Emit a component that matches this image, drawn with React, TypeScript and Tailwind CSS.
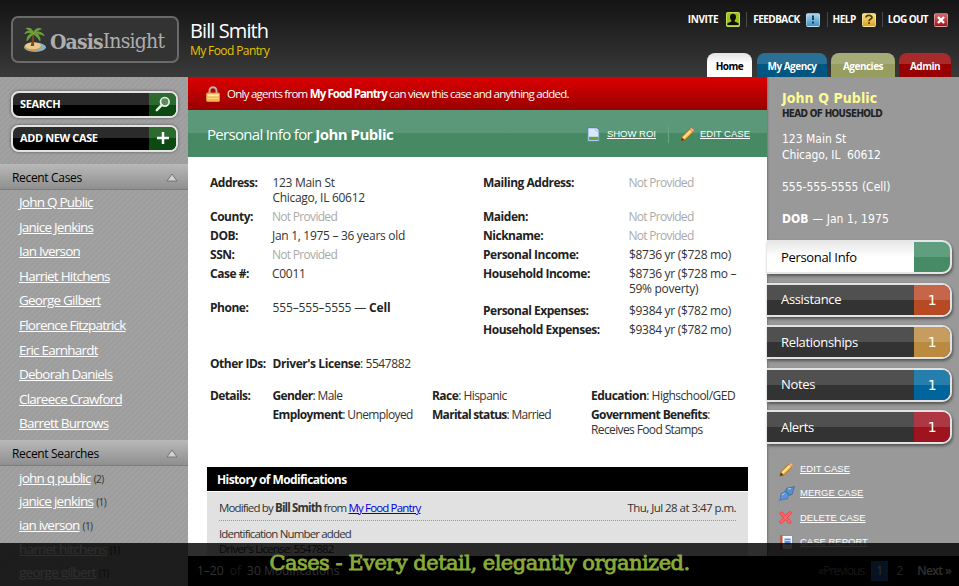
import type { ReactNode } from "react";
import { clsx } from "clsx";

/* ---------- icons ---------- */

function PalmLogo() {
  return (
    <svg width="24" height="26" viewBox="0 0 24 26" className="shrink-0">
      <ellipse cx="12" cy="20.3" rx="11" ry="4.7" fill="#7fb4cc" />
      <ellipse cx="10" cy="19.8" rx="8.5" ry="4.3" fill="#c99a52" />
      <ellipse cx="10" cy="18.8" rx="8" ry="3.4" fill="#ecca8c" />
      <path d="M9.5 6c-.2 5-.6 9-1.900 13h3.600C10.600 14 10.800 10 11.500 6z" fill="#7d4a22" />
      <path d="M10.500 6.500C8 3.500 4.500 3 2 6.500c2.500-1.500 5-1.200 8.500 0zM10.500 6.500C9.500 3 7 .5 3.500 1.500c3 .5 4.500 2.500 7 5zM10.500 6.500C11.500 3 14 .8 18 2c-3 .6-5 2-7.500 4.500zM10.500 6.500c3-2.500 8-2 10.500 2-3-1.800-6-2-10.500-2zM10.500 6.500c-3 0-6.500 2-6.500 7C6 10.500 7.500 9 10.500 6.500zM10.500 6.500c4 .5 6.500 2.500 6.500 7-1.500-3-3.500-4.500-6.500-7z" fill="#6fa03c" stroke="#6fa03c" strokeWidth="1.100" strokeLinejoin="round" />
    </svg>
  );
}

function PersonIcon() {
  return (
    <svg width="14" height="15" viewBox="0 0 14 15">
      <rect width="14" height="15" rx="2" fill="#9bc31c" />
      <rect x=".5" y=".5" width="13" height="14" rx="1.500" fill="none" stroke="#c2dc5a" />
      <path d="M4 5c0-2 1.200-3.200 3-3.200S10 3 10 5c0 1.600-.6 2.700-1.400 3.400v1.100l4 1.700V13H1.400v-1.800l4-1.700V8.400C4.600 7.700 4 6.600 4 5z" fill="#0d0f05" />
    </svg>
  );
}

function SquareIcon({ className, children }: { className: string; children: ReactNode }) {
  return (
    <span className={clsx("flex h-[14px] w-[14px] items-center justify-center rounded-[2px] border border-white/35", className)}>
      {children}
    </span>
  );
}

function PencilIcon() {
  return (
    <svg width="15" height="15" viewBox="0 0 15 15">
      <path d="M1 14l1-4.300L10 2l3 3-8 7.800z" fill="#f4bd45" stroke="#a86d1c" strokeWidth=".8" strokeLinejoin="round" />
      <path d="M3 10.200L10.500 3l1.100 1.100L4 11.500z" fill="#ffe79a" />
      <path d="M9.800 2.200l1.300-1.300c.8-.6 3.500 1.900 2.800 2.800L12.700 5z" fill="#efb3a0" stroke="#b87a4a" strokeWidth=".6" />
      <path d="M1 14l.9-3.500 2.700 2.400z" fill="#5b3418" />
    </svg>
  );
}

function PageIcon() {
  return (
    <svg width="13" height="15" viewBox="0 0 13 15">
      <path d="M.7.700h8.500l3 3v10.600H.7z" fill="#d9e8fb" stroke="#4b7fd0" strokeWidth="1.200" />
      <path d="M9 .7v3.200h3.200" fill="#fff" stroke="#7fa6e0" strokeWidth=".7" />
      <path d="M2 9.800h9.500V13H2z" fill="#66a53c" />
    </svg>
  );
}

function LockIcon() {
  return (
    <svg width="14" height="16" viewBox="0 0 14 16">
      <path d="M3.500 8V4.800C3.500 2.600 4.900 1.300 7 1.300S10.500 2.600 10.500 4.800V8" fill="none" stroke="#b9b4ae" strokeWidth="1.900" />
      <rect x=".5" y="7" width="13" height="8.500" rx="1" fill="#f3b84a" stroke="#e0a23c" strokeWidth=".8" />
      <path d="M1.500 8.300h11v2h-11z" fill="#ffeaa8" />
      <path d="M1.500 12.300h11" stroke="#fbdc8e" />
    </svg>
  );
}

function MergeIcon() {
  return (
    <svg width="16" height="15" viewBox="0 0 16 15">
      <path d="M.6 14.500l1-3.500.5-3.500 3.200-1.500 1.200-1.700L9 6.500l1.500 2L9.300 10l-1 3-3.500.2z" fill="#5f92d8" stroke="#3e6cb2" strokeWidth=".7" />
      <path d="M15.400.5l-1 3.800-1.200 3.900-2.800 1.200L6.500 5l1.500-3 3.700-.5z" fill="#5b8dd2" stroke="#3563a8" strokeWidth=".7" />
      <path d="M6 4.500l4.700 5" stroke="#3f8494" strokeWidth="1.500" />
      <path d="M3 9l2.500-1.500M9 3l3-.5" stroke="#b9d2f4" />
    </svg>
  );
}

function DeleteIcon() {
  return (
    <svg width="13" height="13" viewBox="0 0 13 13">
      <path d="M2.300 2.300l8.400 8.700M10.900 2L2.100 11" stroke="#e0454a" strokeWidth="3.400" strokeLinecap="round" />
      <path d="M2.300 2.300l8.400 8.700M10.900 2L2.100 11" stroke="#fb6468" strokeWidth="2.200" strokeLinecap="round" />
    </svg>
  );
}

function ReportIcon() {
  return (
    <svg width="13" height="15" viewBox="0 0 13 15" className="ml-[1px]">
      <rect x=".5" y=".5" width="12" height="14" fill="#f7f9fd" stroke="#8d93a5" />
      <rect x=".3" y=".3" width="2.200" height="14.400" fill="#c9552c" />
      <rect x="4.500" y="3.500" width="6" height="6" fill="#5f92dc" />
      <path d="M4.500 5.500h6" stroke="#c5daf7" />
    </svg>
  );
}

function SearchIcon() {
  return (
    <svg width="16" height="16" viewBox="0 0 16 16" fill="none" stroke="#e4efe2">
      <circle cx="9.800" cy="5.800" r="4.300" strokeWidth="1.700" fill="#5f8a60" />
      <path d="M6.600 9.200L1.800 14.200" strokeWidth="2.500" strokeLinecap="round" />
    </svg>
  );
}

function PlusIcon() {
  return (
    <svg width="12" height="12" viewBox="0 0 12 12" stroke="#fff" strokeWidth="2.500">
      <path d="M6 0v12M0 6h12" />
    </svg>
  );
}

/* ---------- header ---------- */

const TABS = [
  { label: "Home", className: "w-[45px] mr-[5px] text-black bg-linear-to-b from-[#e4e4e4] to-white to-45%" },
  { label: "My Agency", className: "w-[70px] mr-[4px] text-white bg-linear-to-b from-[#2a7096] from-45% to-[#005680] to-45%" },
  { label: "Agencies", className: "w-[64px] mr-[4px] text-white bg-linear-to-b from-[#a6ac78] from-45% to-[#979d5f] to-45%" },
  { label: "Admin", className: "w-[52px] text-white bg-linear-to-b from-[#a92a2a] from-45% to-[#970000] to-45%" },
];

function Header() {
  return (
    <header className="flex h-[77px] justify-between bg-linear-to-b from-[#141414] to-[#3a3a3a] pl-[11px] pr-[8px]">
      <div className="flex">
        <div className="mt-[16px] flex h-[47px] w-[168px] items-center rounded-[7px] border-2 border-[#6a6a6a] bg-[#333] pl-[10px]">
          <PalmLogo />
          <span className="ml-[3px] flex pt-[3px] font-['DejaVu_Serif_Condensed','DejaVu_Serif',serif] text-[21px] leading-none text-[#adadad]">
            <b className="tracking-[-0.9px]">Oasis</b>
            <span className="tracking-[-0.8px]">Insight</span>
          </span>
        </div>
        <div className="ml-[11px] pt-[19px]">
          <h1 className="text-[20px] leading-[24px] tracking-[-0.9px] text-white">Bill Smith</h1>
          <p className="pt-px text-[12px] leading-[14px] tracking-[-0.6px] text-[#e6c300]">My Food Pantry</p>
        </div>
      </div>
      <div className="flex flex-col items-end justify-between">
        <div className="mr-[3px] mt-[12px] flex h-[15px] items-center text-[10px] font-bold tracking-[-0.5px] text-white">
          <span className="mr-[8px] tracking-[-0.35px]">INVITE</span>
          <PersonIcon />
          <span className="mx-[6px] h-[15px] w-px bg-[#484848]" />
          <span className="mr-[6px] tracking-[-0.55px]">FEEDBACK</span>
          <SquareIcon className="bg-linear-to-b from-[#a9d4ec] to-[#3f93c4]">
            <svg width="8" height="11" viewBox="0 0 8 11"><path d="M3 1.500h2V6H3zM3 7.500h2v2H3z" fill="#17425e" /></svg>
          </SquareIcon>
          <span className="ml-[7px] mr-[5px] h-[15px] w-px bg-[#484848]" />
          <span className="mr-[6px]">HELP</span>
          <SquareIcon className="bg-linear-to-b from-[#f8df7a] to-[#dba51b]">
            <svg width="10" height="11" viewBox="0 0 10 11" fill="none" stroke="#4d3c08" strokeWidth="1.700">
              <path d="M2 3.500C2 .8 8 .8 8 3.400 8 5 5 5 5 7.200M5 8.300V10" />
            </svg>
          </SquareIcon>
          <span className="ml-[6px] mr-[5px] h-[15px] w-px bg-[#484848]" />
          <span className="mr-[6px] tracking-[-0.65px]">LOG OUT</span>
          <SquareIcon className="bg-linear-to-b from-[#cf6a70] to-[#a10d18]">
            <svg width="8" height="8" viewBox="0 0 8 8" stroke="#fff" strokeWidth="2.400"><path d="M1 1l6 6M7 1L1 7" /></svg>
          </SquareIcon>
        </div>
        <nav className="flex h-[24px] font-bold">
          {TABS.map((t) => (
            <a key={t.label} className={clsx("flex items-center justify-center rounded-t-[8px] pt-[3px] text-[10px] tracking-[-0.5px]", t.className)}>
              {t.label}
            </a>
          ))}
        </nav>
      </div>
    </header>
  );
}

/* ---------- left sidebar ---------- */

const CASES = ["John Q Public", "Janice Jenkins", "Ian Iverson", "Harriet Hitchens", "George Gilbert", "Florence Fitzpatrick", "Eric Earnhardt", "Deborah Daniels", "Clareece Crawford", "Barrett Burrows"];
const SEARCHES: [string, number][] = [["john q public", 2], ["janice jenkins", 1], ["ian iverson", 1], ["harriet hitchens", 1], ["george gilbert", 1]];

function SideButton({ label, children }: { label: string; children: ReactNode }) {
  return (
    <button className="flex h-[27px] w-[167px] overflow-hidden rounded-[8px] border-2 border-[#e2e2e2] bg-linear-to-b from-[#2b2b2b] from-50% to-black to-50% shadow-[0_0_3px_#555]">
      <span className="flex h-full flex-1 items-center pl-[7px] text-[11px] font-bold tracking-[-0.38px] text-white">{label}</span>
      <span className="flex h-full w-[27px] items-center justify-center bg-linear-to-b from-[#2d6a30] from-50% to-[#0d4a12] to-50%">{children}</span>
    </button>
  );
}

function SideHeading({ children }: { children: ReactNode }) {
  return (
    <h2 className="flex h-[26px] items-center justify-between border-b border-[#7c7c7c] bg-linear-to-b from-[#b9b9b9] to-[#8f8f8f] pl-[12px] pr-[10px] pt-[2px] text-[12px] tracking-[-0.33px] text-black">
      {children}
      <svg width="12" height="9" viewBox="0 0 12 9"><path d="M6 1l5 7H1z" fill="#d2d2d2" stroke="#6d6d6d" strokeWidth=".9" /></svg>
    </h2>
  );
}

function Sidebar() {
  return (
    <aside className="w-[188px] shrink-0 bg-[#a1a1a1] bg-[repeating-linear-gradient(135deg,transparent_0,transparent_2px,#9a9a9a_3px,transparent_4px)]">
      <div className="flex h-[87px] flex-col gap-[7px] pl-[11px] pt-[13.5px]">
        <SideButton label="SEARCH"><SearchIcon /></SideButton>
        <SideButton label="ADD NEW CASE"><PlusIcon /></SideButton>
      </div>
      <SideHeading>Recent Cases</SideHeading>
      <ul className="h-[250px] pl-[19px] text-[13.500px] leading-[24.6px] tracking-[-0.77px] text-white">
        {CASES.map((name) => (
          <li key={name}><a className="underline">{name}</a></li>
        ))}
      </ul>
      <SideHeading>Recent Searches</SideHeading>
      <ul className="pl-[19px] pt-[0.8px] text-[13.500px] tracking-[-0.75px] text-white">
        {SEARCHES.map(([name, count]) => (
          <li key={name} className="flex h-[23.600px] items-baseline leading-[23.600px]">
            <a className="underline">{name}</a>
            <span className="ml-[3px] text-[10px] leading-none tracking-[-0.6px] text-[#333]">({count})</span>
          </li>
        ))}
      </ul>
    </aside>
  );
}

/* ---------- case details ---------- */

function Row({ label, labelWidth, muted, className, children }: { label: string; labelWidth: string; muted?: boolean; className?: string; children: ReactNode }) {
  return (
    <div className={clsx("flex", className)}>
      <dt className={clsx("shrink-0 font-bold tracking-[-0.48px] text-[#222]", labelWidth)}>{label}</dt>
      <dd className={clsx("whitespace-nowrap", muted ? "tracking-[-0.7px] text-[#aaa]" : "tracking-[-0.3px] text-[#333]")}>{children}</dd>
    </div>
  );
}

function Label({ children }: { children: ReactNode }) {
  return <b className="text-[#222]">{children}</b>;
}

function PersonalInfo() {
  return (
    <dl className="h-[310px] pl-[22px] pt-[17.500px] text-[12px] leading-[15px]">
      <div className="flex h-[181px]">
        <div className="flex w-[273px] flex-col gap-[4px]">
          <Row label="Address:" labelWidth="w-[62.5px]">123 Main St<br />Chicago, IL 60612</Row>
          <Row label="County:" labelWidth="w-[62px]" muted>Not Provided</Row>
          <Row label="DOB:" labelWidth="w-[62px]">Jan 1, 1975 – 36 years old</Row>
          <Row label="SSN:" labelWidth="w-[62px]" muted>Not Provided</Row>
          <Row label="Case #:" labelWidth="w-[62px]">C0011</Row>
          <Row label="Phone:" labelWidth="w-[62.5px]" className="mt-[15px]"><span className="tracking-[-0.15px]">555–555–5555 — <Label>Cell</Label></span></Row>
        </div>
        <div className="flex flex-col gap-[4px]">
          <Row label="Mailing Address:" labelWidth="w-[145.500px]" className="mb-[15px]" muted>Not Provided</Row>
          <Row label="Maiden:" labelWidth="w-[145.500px]" muted>Not Provided</Row>
          <Row label="Nickname:" labelWidth="w-[145.500px]" muted>Not Provided</Row>
          <Row label="Personal Income:" labelWidth="w-[146px]">$8736 yr ($728 mo)</Row>
          <Row label="Household Income:" labelWidth="w-[146px]" className="mb-[3px]">$8736 yr ($728 mo –<br />59% poverty)</Row>
          <Row label="Personal Expenses:" labelWidth="w-[146px]">$9384 yr ($782 mo)</Row>
          <Row label="Household Expenses:" labelWidth="w-[146px]">$9384 yr ($782 mo)</Row>
        </div>
      </div>
      <Row label="Other IDs:" labelWidth="w-[62.5px]"><span className="tracking-[-0.42px]"><Label>Driver's License</Label>: 5547882</span></Row>
      <div className="mt-[17px] flex tracking-[-0.62px] text-[#333]">
        <dt className="w-[62.500px] font-bold text-[#222]">Details:</dt>
        <dd className="w-[159.500px]">
          <p className="mb-[4px]"><Label>Gender</Label>: Male</p>
          <p><Label>Employment</Label>: Unemployed</p>
        </dd>
        <dd className="w-[159px] tracking-[-0.62px]">
          <p className="mb-[4px] tracking-[-0.55px]"><Label>Race</Label>: Hispanic</p>
          <p className="tracking-[-0.7px]"><Label>Marital status</Label>: Married</p>
        </dd>
        <dd>
          <p className="mb-[4px] tracking-[-0.5px]"><Label>Education</Label>: Highschool/GED</p>
          <p><Label>Government Benefits</Label>:<br />Receives Food Stamps</p>
        </dd>
      </div>
    </dl>
  );
}

function History() {
  return (
    <section className="ml-[19px] w-[541px] leading-[15px] text-[#333]">
      <h3 className="flex h-[24px] items-center bg-black pl-[10px] text-[12px] font-bold tracking-[-0.6px] text-white">History of Modifications</h3>
      <div className="mt-px h-[64px] bg-[#e1e1e1] px-[12px] pt-[8px] text-[11.500px] tracking-[-0.85px]">
        <div className="flex h-[21px] justify-between border-b border-dotted border-[#999]">
          <p>Modified by <b>Bill Smith</b> from <a className="text-[#0000e0] underline">My Food Pantry</a></p>
          <p className="tracking-[-0.54px]">Thu, Jul 28 at 3:47 p.m.</p>
        </div>
        <p className="mt-[5px]">Identification Number added<br />Driver's License: 5547882</p>
      </div>
    </section>
  );
}

function CaseDetails() {
  return (
    <main className="w-[579px] shrink-0 bg-white">
      <div className="flex h-[33px] items-center bg-linear-to-b from-[#dc0000] to-[#990000] pl-[18px] text-[11.500px] tracking-[-0.75px] text-white">
        <LockIcon />
        <p className="ml-[7px] pt-px">Only agents from <b className="tracking-[-0.9px]">My Food Pantry</b> can view this case and anything added.</p>
      </div>
      <div className="flex h-[47px] items-center bg-linear-to-b from-[#5b987a] from-48% to-[#468963] to-48% pl-[19px] pr-[17px] text-white">
        <h2 className="mr-auto pt-px text-[15px] tracking-[-0.68px]">Personal Info for <b className="tracking-[-0.5px]">John Public</b></h2>
        <div className="flex items-center pt-[2px] font-['Liberation_Sans',Arial,sans-serif] text-[9.500px]">
          <PageIcon />
          <a className="ml-[7px] underline">SHOW ROI</a>
          <span className="ml-[12px] mr-[11px] h-[16px] w-px bg-[#6ba586]" />
          <PencilIcon />
          <a className="ml-[5px] underline">EDIT CASE</a>
        </div>
      </div>
      <PersonalInfo />
      <History />
    </main>
  );
}

/* ---------- right panel ---------- */

const SECTIONS = [
  { label: "Assistance", badge: "from-[#c5654a] from-50% to-[#b74a22] to-50%" },
  { label: "Relationships", badge: "from-[#c69c60] from-50% to-[#ba8a3f] to-50%" },
  { label: "Notes", badge: "from-[#267eac] from-50% to-[#00659c] to-50%" },
  { label: "Alerts", badge: "from-[#ae3744] from-50% to-[#9f131f] to-50%" },
];

const ACTIONS = [
  { label: "EDIT CASE", icon: <PencilIcon /> },
  { label: "MERGE CASE", icon: <MergeIcon /> },
  { label: "DELETE CASE", icon: <DeleteIcon /> },
  { label: "CASE REPORT", icon: <ReportIcon /> },
];

function CasePanel() {
  return (
    <aside className="min-w-0 flex-1 bg-[#999] shadow-[inset_2px_0_2px_-1px_#777]">
      <div className="h-[163px] pl-[15px] pt-[13px] font-['DejaVu_Sans_Condensed','DejaVu_Sans',sans-serif] text-[12px] leading-[16px] text-white">
        <h2 className="h-[18px] text-[14px] font-bold tracking-[0.1px] text-[#fdfb93]">John Q Public</h2>
        <p className="mb-[11px] text-[10px] font-bold leading-[12px] tracking-[-0.68px] text-[#222]">HEAD OF HOUSEHOLD</p>
        <p>123 Main St</p>
        <p className="mb-[16px] whitespace-pre tracking-[-0.1px]">Chicago, IL  60612</p>
        <p className="mb-[16px]">555-555-5555 (Cell)</p>
        <p className="tracking-[0.1px]"><b>DOB</b> — Jan 1, 1975</p>
      </div>
      <nav className="flex w-[185px] flex-col gap-[8.500px] text-[13px] tracking-[-0.33px]">
        <a className="flex h-[34px] overflow-hidden rounded-r-[10px] border-2 border-l-0 border-[#e6e6e6] bg-linear-to-b from-[#e8e8e8] to-white to-50% text-black shadow-[1px_2px_3px_#555]">
          <span className="flex flex-1 items-center pl-[14px] pt-[2px]">Personal Info</span>
          <span className="w-[36px] bg-linear-to-b from-[#5f9f80] from-50% to-[#468b66] to-50%" />
        </a>
        {SECTIONS.map((s) => (
          <a key={s.label} className="flex h-[34px] overflow-hidden rounded-r-[10px] border-2 border-l-0 border-[#e2e2e2] bg-linear-to-b from-[#505050] from-50% to-[#333] to-50% text-white shadow-[1px_2px_3px_#555]">
            <span className="flex flex-1 items-center pl-[14px] pt-px">{s.label}</span>
            <span className={clsx("flex w-[36px] items-center justify-center bg-linear-to-b pt-px font-['DejaVu_Sans',sans-serif] text-[14px]", s.badge)}>1</span>
          </a>
        ))}
      </nav>
      <ul className="mt-[13px] pl-[12px] font-['Liberation_Sans',Arial,sans-serif] text-[9.500px] text-white">
        {ACTIONS.map((a) => (
          <li key={a.label} className="flex h-[24.400px] items-center">
            <span className="flex w-[21px]">{a.icon}</span>
            <a className="underline">{a.label}</a>
          </li>
        ))}
      </ul>
    </aside>
  );
}

/* ---------- page ---------- */

function Pager() {
  return (
    <div className="absolute bottom-0 left-[188px] right-0 flex h-[30px] items-center bg-black pl-[9px] pr-[8px] text-[12px] text-white">
      <span className="mr-auto">1–20 <span className="mx-[3px] text-[#888]">of</span> 30 Modifications</span>
      <span className="tracking-[-0.9px] text-[#777]">«Previous</span>
      <span className="ml-[7px] flex h-[20px] w-[17px] items-center justify-center bg-[#2869b0]">1</span>
      <span className="ml-[8px] mr-[14px] text-[#bbb]">2</span>
      <span className="font-semibold tracking-[-0.6px]">Next »</span>
    </div>
  );
}

export default function App() {
  return (
    <div className="relative h-[586px] w-[959px] overflow-hidden font-['Open_Sans','Noto_Sans',sans-serif]">
      <Header />
      <div className="flex h-[509px] overflow-hidden">
        <Sidebar />
        <CaseDetails />
        <CasePanel />
      </div>
      <Pager />
      {/* caption strip over the bottom of the page */}
      <div className="absolute bottom-0 left-0 flex h-[43px] w-full items-center justify-center bg-black/82">
        <p className="whitespace-nowrap pb-[1px] font-['DejaVu_Serif',serif] text-[21px] tracking-[-0.52px] text-[#8aab38] [-webkit-text-stroke:0.8px_#8aab38]">
          Cases - Every detail, elegantly organized.
        </p>
      </div>
    </div>
  );
}
